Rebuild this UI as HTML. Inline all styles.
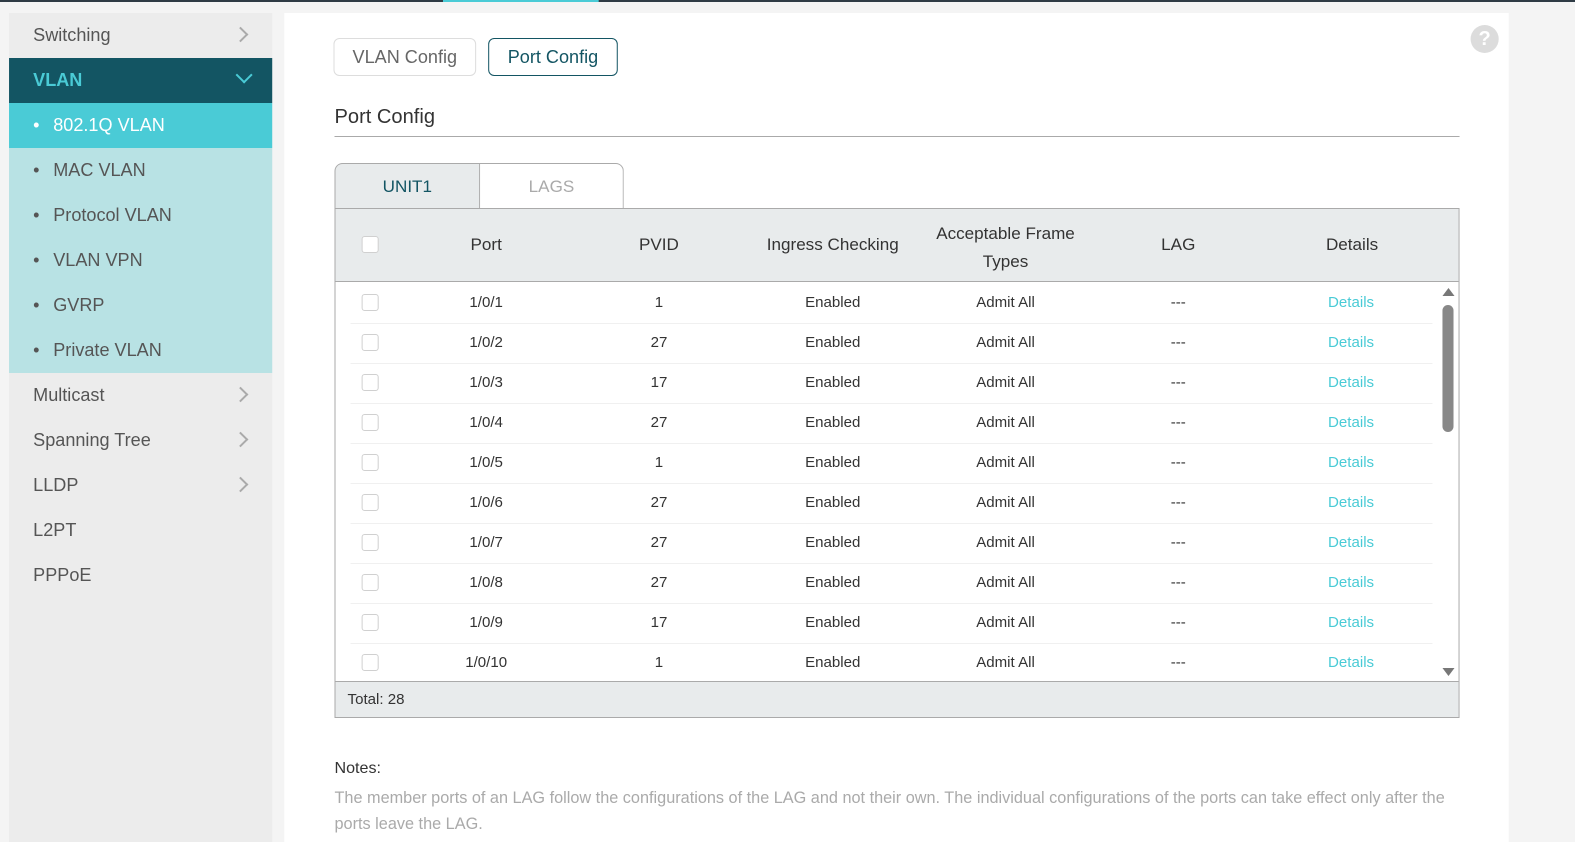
<!DOCTYPE html>
<html><head><meta charset="utf-8"><style>
*{box-sizing:border-box;margin:0;padding:0}
body{width:1575px;height:842px;overflow:hidden;background:#f4f4f4;font-family:"Liberation Sans",Arial,sans-serif;position:relative}
.wrap{position:absolute;left:0;top:0;width:1568px;height:842px;transform:scale(1.0045,1);transform-origin:0 0}
.topbar{position:absolute;left:0;top:0;width:1575px;height:2px;background:#2f3b45}
.topcy{position:absolute;left:441px;top:0;width:155px;height:2px;background:#4acbd6}
.side{position:absolute;left:9px;top:13px;width:262px;height:829px;background:#ececec}
.si{height:45px;line-height:44px;padding-left:24px;font-size:18px;color:#555;position:relative}
.si .ch{position:absolute;right:26px;top:16px;width:11px;height:11px;border-right:2px solid #aaa;border-top:2px solid #aaa;transform:rotate(45deg)}
.vlan{background:#135563;color:#4acbd6;font-weight:bold}
.vlan .dn{position:absolute;right:22px;top:11px;width:12px;height:12px;border-right:2px solid #4acbd6;border-bottom:2px solid #4acbd6;transform:rotate(45deg)}
.sub{background:#b8e2e4;color:#555}
.sub.act{background:#4acbd6;color:#fff}
.sub span{display:inline-block;width:20px}
.main{position:absolute;left:283px;top:13px;width:1219px;height:829px;background:#fff}
.btn{position:absolute;top:25px;height:38px;border-radius:6px;font-size:18px;line-height:36px;text-align:center}
.help{position:absolute;left:1181px;top:12px;width:28px;height:28px;border-radius:50%;background:#dcdcdc;color:#fff;font-weight:bold;font-size:20px;text-align:center;line-height:28px}
.h2{position:absolute;left:50px;top:93px;font-size:20px;color:#333}
.hr{position:absolute;left:50px;top:123px;width:1120px;height:1px;background:#aaa}
.tab{position:absolute;top:150px;font-size:17px;text-align:center;line-height:45px;border:1px solid #aaa;border-bottom:none}
.tbl{position:absolute;left:50px;top:195px;width:1120px;height:510px;border:1px solid #aaa}
.thd{position:absolute;left:0;top:0;width:1118px;height:73px;background:#e8ebec;border-bottom:1px solid #aaa}
.c{position:absolute;text-align:center;transform:translateX(-50%);white-space:nowrap}
.cb{position:absolute;left:26px;width:17px;height:17px;border:1.5px solid #d0d0d0;border-radius:3px;background:#fff}
.row{position:absolute;left:0;width:1092px;height:40px;font-size:15px;color:#333}
.row .c{top:11px}
.row .cb{top:11px}
.sep{position:absolute;left:15px;top:0;width:1077px;height:1px;background:#f0f0f0}
.d{color:#4acbd6}
.foot{position:absolute;left:0;top:472px;width:1118px;height:36px;background:#e8ebec;border-top:1px solid #aaa;font-size:15px;color:#333;padding-left:12px;line-height:35px}
</style></head><body>
<div class="topbar"></div>
<div class="wrap">
<div class="topcy"></div>
<div class="side">
<div class="si">Switching<div class="ch"></div></div>
<div class="si vlan">VLAN<div class="dn"></div></div>
<div class="si sub act"><span>•</span>802.1Q VLAN</div>
<div class="si sub"><span>•</span>MAC VLAN</div>
<div class="si sub"><span>•</span>Protocol VLAN</div>
<div class="si sub"><span>•</span>VLAN VPN</div>
<div class="si sub"><span>•</span>GVRP</div>
<div class="si sub"><span>•</span>Private VLAN</div>
<div class="si">Multicast<div class="ch"></div></div>
<div class="si">Spanning Tree<div class="ch"></div></div>
<div class="si">LLDP<div class="ch"></div></div>
<div class="si">L2PT</div>
<div class="si">PPPoE</div>
</div>
<div class="main">
<div class="btn" style="left:49px;width:142px;border:1px solid #ddd;color:#666">VLAN Config</div>
<div class="btn" style="left:203px;width:129px;border:1px solid #135563;color:#135563">Port Config</div>
<div class="help">?</div>
<div class="h2">Port Config</div>
<div class="hr"></div>
<div class="tab" style="left:50px;width:145px;height:46px;background:#e8ebec;color:#135563;border-radius:8px 0 0 0">UNIT1</div>
<div class="tab" style="left:194px;width:144px;height:45px;background:#fff;color:#aaa;border-radius:0 8px 0 0">LAGS</div>
<div class="tbl">
<div class="thd">
<div class="cb" style="top:27px"></div>
<div class="c" style="left:150px;top:26px;font-size:17px;color:#333">Port</div>
<div class="c" style="left:322px;top:26px;font-size:17px;color:#333">PVID</div>
<div class="c" style="left:495px;top:26px;font-size:17px;color:#333">Ingress Checking</div>
<div class="c" style="left:667px;top:11px;font-size:17px;color:#333;line-height:28px">Acceptable Frame<br>Types</div>
<div class="c" style="left:839px;top:26px;font-size:17px;color:#333">LAG</div>
<div class="c" style="left:1012px;top:26px;font-size:17px;color:#333">Details</div>
</div>
<div style="position:absolute;left:1102px;top:79px;width:0;height:0;border-left:6px solid transparent;border-right:6px solid transparent;border-bottom:8px solid #777"></div>
<div style="position:absolute;left:1102px;top:459px;width:0;height:0;border-left:6px solid transparent;border-right:6px solid transparent;border-top:8px solid #777"></div>
<div style="position:absolute;left:1102px;top:96px;width:11px;height:127px;border-radius:6px;background:#888"></div>

<div class="row" style="top:74px"><div class="cb"></div><div class="c" style="left:150px">1/0/1</div><div class="c" style="left:322px">1</div><div class="c" style="left:495px">Enabled</div><div class="c" style="left:667px">Admit All</div><div class="c" style="left:839px">---</div><div class="c d" style="left:1011px">Details</div></div>
<div class="row" style="top:114px"><div class="sep"></div><div class="cb"></div><div class="c" style="left:150px">1/0/2</div><div class="c" style="left:322px">27</div><div class="c" style="left:495px">Enabled</div><div class="c" style="left:667px">Admit All</div><div class="c" style="left:839px">---</div><div class="c d" style="left:1011px">Details</div></div>
<div class="row" style="top:154px"><div class="sep"></div><div class="cb"></div><div class="c" style="left:150px">1/0/3</div><div class="c" style="left:322px">17</div><div class="c" style="left:495px">Enabled</div><div class="c" style="left:667px">Admit All</div><div class="c" style="left:839px">---</div><div class="c d" style="left:1011px">Details</div></div>
<div class="row" style="top:194px"><div class="sep"></div><div class="cb"></div><div class="c" style="left:150px">1/0/4</div><div class="c" style="left:322px">27</div><div class="c" style="left:495px">Enabled</div><div class="c" style="left:667px">Admit All</div><div class="c" style="left:839px">---</div><div class="c d" style="left:1011px">Details</div></div>
<div class="row" style="top:234px"><div class="sep"></div><div class="cb"></div><div class="c" style="left:150px">1/0/5</div><div class="c" style="left:322px">1</div><div class="c" style="left:495px">Enabled</div><div class="c" style="left:667px">Admit All</div><div class="c" style="left:839px">---</div><div class="c d" style="left:1011px">Details</div></div>
<div class="row" style="top:274px"><div class="sep"></div><div class="cb"></div><div class="c" style="left:150px">1/0/6</div><div class="c" style="left:322px">27</div><div class="c" style="left:495px">Enabled</div><div class="c" style="left:667px">Admit All</div><div class="c" style="left:839px">---</div><div class="c d" style="left:1011px">Details</div></div>
<div class="row" style="top:314px"><div class="sep"></div><div class="cb"></div><div class="c" style="left:150px">1/0/7</div><div class="c" style="left:322px">27</div><div class="c" style="left:495px">Enabled</div><div class="c" style="left:667px">Admit All</div><div class="c" style="left:839px">---</div><div class="c d" style="left:1011px">Details</div></div>
<div class="row" style="top:354px"><div class="sep"></div><div class="cb"></div><div class="c" style="left:150px">1/0/8</div><div class="c" style="left:322px">27</div><div class="c" style="left:495px">Enabled</div><div class="c" style="left:667px">Admit All</div><div class="c" style="left:839px">---</div><div class="c d" style="left:1011px">Details</div></div>
<div class="row" style="top:394px"><div class="sep"></div><div class="cb"></div><div class="c" style="left:150px">1/0/9</div><div class="c" style="left:322px">17</div><div class="c" style="left:495px">Enabled</div><div class="c" style="left:667px">Admit All</div><div class="c" style="left:839px">---</div><div class="c d" style="left:1011px">Details</div></div>
<div class="row" style="top:434px"><div class="sep"></div><div class="cb"></div><div class="c" style="left:150px">1/0/10</div><div class="c" style="left:322px">1</div><div class="c" style="left:495px">Enabled</div><div class="c" style="left:667px">Admit All</div><div class="c" style="left:839px">---</div><div class="c d" style="left:1011px">Details</div></div>

<div class="foot">Total: 28</div>
</div>
<div style="position:absolute;left:50px;top:747px;font-size:16px;color:#333">Notes:</div>
<div style="position:absolute;left:50px;top:772px;width:1125px;font-size:16.2px;color:#aaa;line-height:26px">The member ports of an LAG follow the configurations of the LAG and not their own. The individual configurations of the ports can take effect only after the ports leave the LAG.</div>
</div>
</div>
</body></html>
